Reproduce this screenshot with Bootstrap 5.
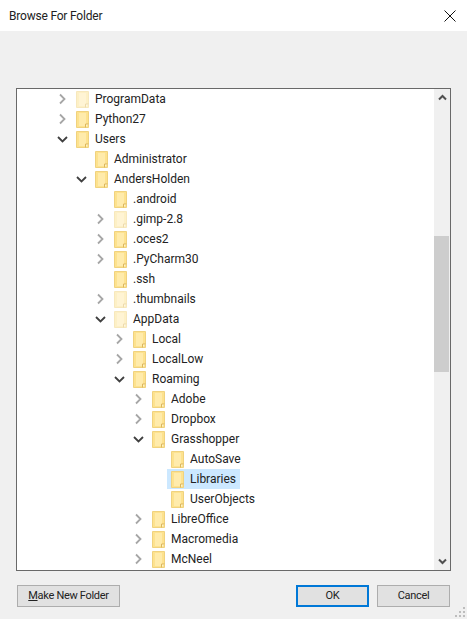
<!DOCTYPE html>
<html lang="en">
<head>
<meta charset="utf-8">
<title>Browse For Folder</title>
<link href="https://cdn.jsdelivr.net/npm/bootstrap@5.3.0/dist/css/bootstrap.min.css" rel="stylesheet">
<style>
html,body{height:100%;overflow:hidden}
body{background:#f0f0f0;font-family:Roboto,"Open Sans","Liberation Sans",sans-serif;font-size:12px;color:#222;line-height:20px}
.titlebar{height:31px;background:#fff;padding:0 11px 0 9px;letter-spacing:-.2px}
.dlg-space{height:57px}
.dlg-body{padding:0 16px}
.treebox{height:483px;border:1px solid #696969;background:#fff}
.treelist{padding:0;margin:0;list-style:none}
.trow{height:20px}
.lv0{padding-left:36px}.lv1{padding-left:55px}.lv2{padding-left:74px}.lv3{padding-left:93px}.lv4{padding-left:112px}.lv5{padding-left:131px}
.twisty{width:19px;height:20px;flex:none}
.tnode{height:20px;padding:0 4px;gap:6px}
.tnode.picked{background:#cce8ff}
.fold{width:13px;height:17px;flex:none}
.ghost .fold{opacity:.5}
.sbar{width:16px;background:#f0f0f0;flex:none}
.sbtn{height:17px;flex:none}
.strack-a{height:130px;flex:none}
.sthumb{height:136px;background:#cdcdcd;flex:none;margin-right:1px}
.dlg-foot{padding:14px 17px 0 17px}
.winbtn{height:22px;padding:0;font-size:11px;letter-spacing:-.3px;line-height:18px;color:#222;background:#e1e1e1;border:1px solid #adadad;border-radius:0}
.winbtn:hover{background:#e1e1e1;color:#222;border-color:#adadad}
.w-make{width:103px}
.w-act{width:73px}
.w-ok{border:2px solid #0078d7}
.w-ok:hover{border-color:#0078d7}
.grip{position:absolute;right:2px;bottom:2px;width:10px;height:10px}
</style>
</head>
<body class="position-relative">
<svg width="0" height="0" class="position-absolute">
  <symbol id="f" viewBox="0 0 13 17">
    <path d="M.5.5h12v16H.5z" fill="#fde28e" stroke="#f0d27e"/>
    <path d="M3 2h7v13H3z" fill="#ffebab"/>
    <path d="M9.500 16.500v-3.500h3" fill="#fff3c8" stroke="#dcb75c"/>
  </symbol>
  <symbol id="cr" viewBox="0 0 18 20"><path d="M6.500 5.500 11 10l-4.500 4.500" fill="none" stroke="#a6a6a6" stroke-width="1.800"/></symbol>
  <symbol id="cd" viewBox="0 0 18 20"><path d="M4.500 8 9 12.500 13.500 8" fill="none" stroke="#404040" stroke-width="1.800"/></symbol>
</svg>

<div class="titlebar d-flex align-items-center justify-content-between">
  <span>Browse For Folder</span>
  <svg width="12" height="12" viewBox="0 0 12 12"><path d="M.5.5l11 11M11.500.5l-11 11" stroke="#111" stroke-width="1" fill="none"/></svg>
</div>
<div class="dlg-space"></div>
<div class="dlg-body">
  <div class="treebox d-flex">
    <ul class="treelist flex-grow-1">
      <li class="trow d-flex lv0 ghost"><svg class="twisty"><use href="#cr"/></svg><span class="tnode d-flex align-items-center"><svg class="fold"><use href="#f"/></svg>ProgramData</span></li>
      <li class="trow d-flex lv0"><svg class="twisty"><use href="#cr"/></svg><span class="tnode d-flex align-items-center"><svg class="fold"><use href="#f"/></svg>Python27</span></li>
      <li class="trow d-flex lv0"><svg class="twisty"><use href="#cd"/></svg><span class="tnode d-flex align-items-center"><svg class="fold"><use href="#f"/></svg>Users</span></li>
      <li class="trow d-flex lv1"><span class="twisty"></span><span class="tnode d-flex align-items-center"><svg class="fold"><use href="#f"/></svg>Administrator</span></li>
      <li class="trow d-flex lv1"><svg class="twisty"><use href="#cd"/></svg><span class="tnode d-flex align-items-center"><svg class="fold"><use href="#f"/></svg>AndersHolden</span></li>
      <li class="trow d-flex lv2"><span class="twisty"></span><span class="tnode d-flex align-items-center"><svg class="fold"><use href="#f"/></svg>.android</span></li>
      <li class="trow d-flex lv2 ghost"><svg class="twisty"><use href="#cr"/></svg><span class="tnode d-flex align-items-center"><svg class="fold"><use href="#f"/></svg>.gimp-2.8</span></li>
      <li class="trow d-flex lv2"><svg class="twisty"><use href="#cr"/></svg><span class="tnode d-flex align-items-center"><svg class="fold"><use href="#f"/></svg>.oces2</span></li>
      <li class="trow d-flex lv2"><svg class="twisty"><use href="#cr"/></svg><span class="tnode d-flex align-items-center"><svg class="fold"><use href="#f"/></svg>.PyCharm30</span></li>
      <li class="trow d-flex lv2"><span class="twisty"></span><span class="tnode d-flex align-items-center"><svg class="fold"><use href="#f"/></svg>.ssh</span></li>
      <li class="trow d-flex lv2 ghost"><svg class="twisty"><use href="#cr"/></svg><span class="tnode d-flex align-items-center"><svg class="fold"><use href="#f"/></svg>.thumbnails</span></li>
      <li class="trow d-flex lv2 ghost"><svg class="twisty"><use href="#cd"/></svg><span class="tnode d-flex align-items-center"><svg class="fold"><use href="#f"/></svg>AppData</span></li>
      <li class="trow d-flex lv3"><svg class="twisty"><use href="#cr"/></svg><span class="tnode d-flex align-items-center"><svg class="fold"><use href="#f"/></svg>Local</span></li>
      <li class="trow d-flex lv3"><svg class="twisty"><use href="#cr"/></svg><span class="tnode d-flex align-items-center"><svg class="fold"><use href="#f"/></svg>LocalLow</span></li>
      <li class="trow d-flex lv3"><svg class="twisty"><use href="#cd"/></svg><span class="tnode d-flex align-items-center"><svg class="fold"><use href="#f"/></svg>Roaming</span></li>
      <li class="trow d-flex lv4"><svg class="twisty"><use href="#cr"/></svg><span class="tnode d-flex align-items-center"><svg class="fold"><use href="#f"/></svg>Adobe</span></li>
      <li class="trow d-flex lv4"><svg class="twisty"><use href="#cr"/></svg><span class="tnode d-flex align-items-center"><svg class="fold"><use href="#f"/></svg>Dropbox</span></li>
      <li class="trow d-flex lv4"><svg class="twisty"><use href="#cd"/></svg><span class="tnode d-flex align-items-center"><svg class="fold"><use href="#f"/></svg>Grasshopper</span></li>
      <li class="trow d-flex lv5"><span class="twisty"></span><span class="tnode d-flex align-items-center"><svg class="fold"><use href="#f"/></svg>AutoSave</span></li>
      <li class="trow d-flex lv5"><span class="twisty"></span><span class="tnode picked d-flex align-items-center"><svg class="fold"><use href="#f"/></svg>Libraries</span></li>
      <li class="trow d-flex lv5"><span class="twisty"></span><span class="tnode d-flex align-items-center"><svg class="fold"><use href="#f"/></svg>UserObjects</span></li>
      <li class="trow d-flex lv4"><svg class="twisty"><use href="#cr"/></svg><span class="tnode d-flex align-items-center"><svg class="fold"><use href="#f"/></svg>LibreOffice</span></li>
      <li class="trow d-flex lv4"><svg class="twisty"><use href="#cr"/></svg><span class="tnode d-flex align-items-center"><svg class="fold"><use href="#f"/></svg>Macromedia</span></li>
      <li class="trow d-flex lv4"><svg class="twisty"><use href="#cr"/></svg><span class="tnode d-flex align-items-center"><svg class="fold"><use href="#f"/></svg>McNeel</span></li>
    </ul>
    <div class="sbar d-flex flex-column">
      <div class="sbtn d-flex align-items-center justify-content-center"><svg width="9" height="7" viewBox="0 0 9 7"><path d="M1 5.500 4.500 2 8 5.500" fill="none" stroke="#505050" stroke-width="2"/></svg></div>
      <div class="strack-a"></div>
      <div class="sthumb"></div>
      <div class="flex-grow-1"></div>
      <div class="sbtn d-flex align-items-center justify-content-center"><svg width="9" height="7" viewBox="0 0 9 7"><path d="M1 1.500 4.500 5 8 1.500" fill="none" stroke="#505050" stroke-width="2"/></svg></div>
    </div>
  </div>
</div>
<div class="dlg-foot d-flex">
  <button type="button" class="btn winbtn w-make"><u>M</u>ake New Folder</button>
  <div class="ms-auto d-flex gap-2">
    <button type="button" class="btn winbtn w-act w-ok">OK</button>
    <button type="button" class="btn winbtn w-act">Cancel</button>
  </div>
</div>
<svg class="grip" viewBox="0 0 10 10"><g fill="#bdbdbd"><rect x="8" y="0" width="2" height="2"/><rect x="4" y="4" width="2" height="2"/><rect x="8" y="4" width="2" height="2"/><rect x="0" y="8" width="2" height="2"/><rect x="4" y="8" width="2" height="2"/><rect x="8" y="8" width="2" height="2"/></g></svg>
</body>
</html>
